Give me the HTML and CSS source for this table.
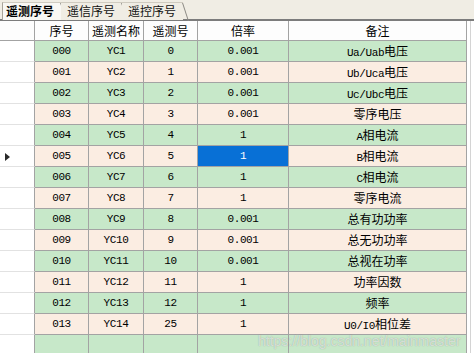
FILE: index.html
```html
<!DOCTYPE html>
<html>
<head>
<meta charset="utf-8">
<link rel="stylesheet" href="styles.css">
</head>
<body>
<div class="tabs">
  <div class="tab active">遥测序号</div>
  <div class="tab">遥信序号</div>
  <div class="tab">遥控序号</div>
</div>
<div class="gridwrap">
  <div class="grid">
    <div class="row head">
      <div class="rh"></div><div class="c">序号</div><div class="c">遥测名称</div><div class="c">遥测号</div><div class="c">倍率</div><div class="c">备注</div>
    </div>
    <div class="row g"><div class="rh"></div><div class="c m">000</div><div class="c m">YC1</div><div class="c m">0</div><div class="c m">0.001</div><div class="c"><span class="m">Ua/Uab</span>电压</div></div>
    <div class="row p"><div class="rh"></div><div class="c m">001</div><div class="c m">YC2</div><div class="c m">1</div><div class="c m">0.001</div><div class="c"><span class="m">Ub/Uca</span>电压</div></div>
    <div class="row g"><div class="rh"></div><div class="c m">002</div><div class="c m">YC3</div><div class="c m">2</div><div class="c m">0.001</div><div class="c"><span class="m">Uc/Ubc</span>电压</div></div>
    <div class="row p"><div class="rh"></div><div class="c m">003</div><div class="c m">YC4</div><div class="c m">3</div><div class="c m">0.001</div><div class="c">零序电压</div></div>
    <div class="row g"><div class="rh"></div><div class="c m">004</div><div class="c m">YC5</div><div class="c m">4</div><div class="c m">1</div><div class="c"><span class="m">A</span>相电流</div></div>
    <div class="row p"><div class="rh"><span class="arrow"></span></div><div class="c m">005</div><div class="c m">YC6</div><div class="c m">5</div><div class="c m sel">1</div><div class="c"><span class="m">B</span>相电流</div></div>
    <div class="row g"><div class="rh"></div><div class="c m">006</div><div class="c m">YC7</div><div class="c m">6</div><div class="c m">1</div><div class="c"><span class="m">C</span>相电流</div></div>
    <div class="row p"><div class="rh"></div><div class="c m">007</div><div class="c m">YC8</div><div class="c m">7</div><div class="c m">1</div><div class="c">零序电流</div></div>
    <div class="row g"><div class="rh"></div><div class="c m">008</div><div class="c m">YC9</div><div class="c m">8</div><div class="c m">0.001</div><div class="c">总有功功率</div></div>
    <div class="row p"><div class="rh"></div><div class="c m">009</div><div class="c m">YC10</div><div class="c m">9</div><div class="c m">0.001</div><div class="c">总无功功率</div></div>
    <div class="row g"><div class="rh"></div><div class="c m">010</div><div class="c m">YC11</div><div class="c m">10</div><div class="c m">0.001</div><div class="c">总视在功率</div></div>
    <div class="row p"><div class="rh"></div><div class="c m">011</div><div class="c m">YC12</div><div class="c m">11</div><div class="c m">1</div><div class="c">功率因数</div></div>
    <div class="row g"><div class="rh"></div><div class="c m">012</div><div class="c m">YC13</div><div class="c m">12</div><div class="c m">1</div><div class="c">频率</div></div>
    <div class="row p"><div class="rh"></div><div class="c m">013</div><div class="c m">YC14</div><div class="c m">25</div><div class="c m">1</div><div class="c"><span class="m">U0/I0</span>相位差</div></div>
    <div class="row g"><div class="rh"></div><div class="c"></div><div class="c"></div><div class="c"></div><div class="c"></div><div class="c"></div></div>
  </div>
  <div class="watermark">https://blog.csdn.net/mainmaster</div>
</div>
</body>
</html>
```

FILE: styles.css
```css
html, body {
  margin: 0;
  padding: 0;
  background: #ffffff;
  overflow: hidden;
}
body {
  width: 474px;
  height: 353px;
  font-family: "Noto Sans CJK SC", sans-serif;
  font-size: 12px;
  color: #000;
}
.tabs {
  display: flex;
  height: 19px;
  background: #f0ede4;
  border-bottom: 2px solid #7c7c7c;
  padding-left: 2px;
}
.tab {
  position: relative;
  height: 17px;
  margin-top: 2px;
  line-height: 16px;
  padding: 0 7px 0 6px;
  border-top: 1px solid #cfcbc0;
  background: #f0ede4;
  color: #111;
}
.tab.active {
  font-weight: bold;
  background: #f9f8f4;
  border-left: 1px solid #a8a49a;
  padding-left: 3px;
  color: #000;
}
.tab::after {
  content: "";
  position: absolute;
  right: -3px;
  top: 0;
  height: 18px;
  width: 0;
  border-right: 1px solid #8c8a84;
  transform: skewX(18deg);
}
.gridwrap {
  position: relative;
  width: 470px;
  border-right: 1px solid #d4d4d4;
  height: 332px;
  overflow: hidden;
}
.grid {
  width: 467px;
}
.row {
  display: grid;
  grid-template-columns: 35px 54px 55px 54px 91px 178px;
  height: 21px;
}
.row.head {
  height: 20px;
}
.row > div {
  box-sizing: border-box;
  border-right: 1px solid #a3a3a3;
  border-bottom: 1px solid #a3a3a3;
  text-align: center;
  line-height: 20px;
  white-space: nowrap;
  overflow: hidden;
}
.row.head > div {
  line-height: 19px;
  background: #fdfdfd;
}
.row > .rh {
  background: #ffffff;
  border-bottom-color: #e2e2e2;
  text-align: left;
  padding-left: 5px;
}
.row.head > .rh {
  border-bottom-color: #a3a3a3;
}
.row.g > .c {
  background: #c7e8c9;
}
.row.p > .c {
  background: #fbede2;
}
.m {
  font-family: "Liberation Mono", monospace;
  font-size: 11px;
  letter-spacing: -0.4px;
}
.row.p > .c.sel {
  background: #0870d6;
  color: #ffffff;
}
.arrow {
  display: inline-block;
  width: 0;
  height: 0;
  border-left: 5px solid #2a2a2a;
  border-top: 4px solid transparent;
  border-bottom: 4px solid transparent;
  vertical-align: middle;
  margin-top: -2px;
}
.watermark {
  position: absolute;
  left: 258px;
  top: 312px;
  font-family: "Liberation Sans", Arial, sans-serif;
  font-size: 14px;
  line-height: 16px;
  color: rgba(255, 255, 255, 0.6);
  text-shadow: 0 0 1px rgba(90, 90, 90, 0.5);
}
```
